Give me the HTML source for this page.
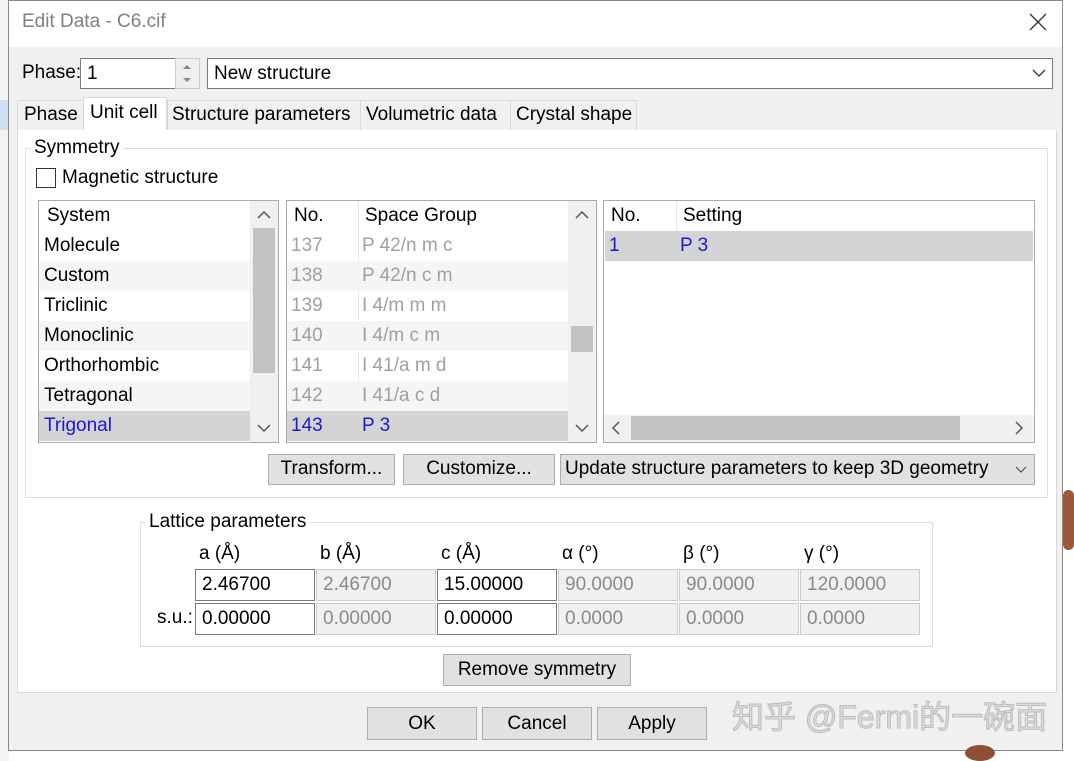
<!DOCTYPE html>
<html><head><meta charset="utf-8"><style>
*{box-sizing:border-box;margin:0;padding:0}
body{width:1074px;height:761px;position:relative;overflow:hidden;background:#fff;font-family:"Segoe UI","Liberation Sans","Noto Sans CJK SC",sans-serif;font-size:19px;color:#000}
.a{position:absolute}
.box{position:absolute;background:#fff;border:1px solid #7a7a7a}
.btn{position:absolute;background:#e1e1e1;border:1px solid #adadad;text-align:center;line-height:28px}
.t{position:absolute;white-space:nowrap;line-height:30px}
.g{color:#a0a0a0}.b{color:#1a1acc}
.row{position:absolute;height:30px}
.in{position:absolute;height:32px;border:1px solid #7a7a7a;background:#fff;padding-left:6px;line-height:30px}
.dis{border:1px solid #ccc;background:#f0f0f0;color:#8a8a8a}
</style></head><body>
<div class="a" style="left:0;top:0;width:9px;height:761px;background:#f3f3f3"></div>
<div class="a" style="left:0;top:100px;width:9px;height:30px;background:#cfe0f2"></div>
<div class="a" style="left:8px;top:0;width:1055px;height:751px;background:#f0f0f0;border:1px solid #888"></div>
<div class="a" style="left:9px;top:1px;width:1053px;height:46px;background:#fff"></div>
<div class="t" style="left:22px;top:7px;color:#808080;font-size:19px">Edit Data - C6.cif</div>
<svg class="a" style="left:1029px;top:13px" width="18" height="18"><path d="M1 1L17 17M17 1L1 17" stroke="#333" stroke-width="1.3"/></svg>
<div class="t" style="left:22px;top:58px">Phase:</div>
<div class="in" style="left:80px;top:58px;width:96px;height:31px;line-height:29px">1</div>
<div class="a" style="left:175px;top:58px;width:25px;height:31px;border:1px solid #ccc;background:#eee"></div>
<svg class="a" style="left:180px;top:62px" width="14" height="24"><path d="M3 7L7 3L11 7Z M3 16L7 20L11 16Z" fill="#888"/></svg>
<div class="in" style="left:207px;top:58px;width:846px;height:31px;line-height:29px">New structure</div>
<svg class="a" style="left:1032px;top:68px" width="14" height="10"><path d="M1 2L7 8L13 2" stroke="#333" fill="none" stroke-width="1.3"/></svg>
<div class="a" style="left:17px;top:100px;width:620px;height:31px;background:#f0f0f0;border:1px solid #d9d9d9"></div>
<div class="t" style="left:24px;top:100px">Phase</div>
<div class="a" style="left:83px;top:97px;width:84px;height:35px;background:#fff;border:1px solid #d9d9d9;border-bottom:none"></div>
<div class="t" style="left:90px;top:98px">Unit cell</div>
<div class="a" style="left:167px;top:100px;width:1px;height:30px;background:#d9d9d9"></div>
<div class="t" style="left:172px;top:100px">Structure parameters</div>
<div class="a" style="left:360px;top:100px;width:1px;height:30px;background:#d9d9d9"></div>
<div class="t" style="left:366px;top:100px">Volumetric data</div>
<div class="a" style="left:510px;top:100px;width:1px;height:30px;background:#d9d9d9"></div>
<div class="t" style="left:516px;top:100px">Crystal shape</div>
<div class="a" style="left:17px;top:130px;width:1040px;height:563px;background:#fff;border:1px solid #d9d9d9;border-top:none"></div>
<div class="a" style="left:25px;top:148px;width:1023px;height:350px;border:1px solid #dcdcdc"></div>
<div class="t" style="left:31px;top:133px;background:#fff;padding:0 3px">Symmetry</div>
<div class="a" style="left:36px;top:168px;width:20px;height:20px;border:1px solid #333;background:#fff"></div>
<div class="t" style="left:62px;top:163px">Magnetic structure</div>
<div class="box" style="left:38px;top:200px;width:241px;height:243px;border-color:#aaa"></div>
<div class="t" style="left:47px;top:201px">System</div>
<div class="row" style="left:39px;top:261px;width:211px;background:#f5f5f5"></div>
<div class="row" style="left:39px;top:321px;width:211px;background:#f5f5f5"></div>
<div class="row" style="left:39px;top:381px;width:211px;background:#f5f5f5"></div>
<div class="row" style="left:39px;top:411px;width:211px;background:#d4d4d4"></div>
<div class="t" style="left:44px;top:231px">Molecule</div>
<div class="t" style="left:44px;top:261px">Custom</div>
<div class="t" style="left:44px;top:291px">Triclinic</div>
<div class="t" style="left:44px;top:321px">Monoclinic</div>
<div class="t" style="left:44px;top:351px">Orthorhombic</div>
<div class="t" style="left:44px;top:381px">Tetragonal</div>
<div class="t b" style="left:44px;top:411px">Trigonal</div>
<div class="a" style="left:250px;top:201px;width:28px;height:241px;background:#f0f0f0"></div>
<div class="a" style="left:253px;top:228px;width:22px;height:145px;background:#c2c2c2"></div>
<svg class="a" style="left:257px;top:210px" width="14" height="10"><path d="M1 8L7 2L13 8" stroke="#555" fill="none" stroke-width="1.5"/></svg>
<svg class="a" style="left:257px;top:423px" width="14" height="10"><path d="M1 2L7 8L13 2" stroke="#555" fill="none" stroke-width="1.5"/></svg>
<div class="box" style="left:286px;top:200px;width:311px;height:243px;border-color:#aaa"></div>
<div class="a" style="left:358px;top:201px;width:1px;height:210px;background:#e8e8e8"></div>
<div class="t" style="left:294px;top:201px">No.</div>
<div class="t" style="left:365px;top:201px">Space Group</div>
<div class="row" style="left:287px;top:261px;width:281px;background:#f5f5f5"></div>
<div class="row" style="left:287px;top:321px;width:281px;background:#f5f5f5"></div>
<div class="row" style="left:287px;top:381px;width:281px;background:#f5f5f5"></div>
<div class="row" style="left:287px;top:411px;width:281px;background:#d4d4d4"></div>
<div class="t g" style="left:291px;top:231px">137</div><div class="t g" style="left:362px;top:231px">P 42/n m c</div>
<div class="t g" style="left:291px;top:261px">138</div><div class="t g" style="left:362px;top:261px">P 42/n c m</div>
<div class="t g" style="left:291px;top:291px">139</div><div class="t g" style="left:362px;top:291px">I 4/m m m</div>
<div class="t g" style="left:291px;top:321px">140</div><div class="t g" style="left:362px;top:321px">I 4/m c m</div>
<div class="t g" style="left:291px;top:351px">141</div><div class="t g" style="left:362px;top:351px">I 41/a m d</div>
<div class="t g" style="left:291px;top:381px">142</div><div class="t g" style="left:362px;top:381px">I 41/a c d</div>
<div class="t b" style="left:291px;top:411px">143</div><div class="t b" style="left:362px;top:411px">P 3</div>
<div class="a" style="left:568px;top:201px;width:28px;height:241px;background:#f0f0f0"></div>
<div class="a" style="left:571px;top:326px;width:22px;height:26px;background:#c2c2c2"></div>
<svg class="a" style="left:575px;top:210px" width="14" height="10"><path d="M1 8L7 2L13 8" stroke="#555" fill="none" stroke-width="1.5"/></svg>
<svg class="a" style="left:575px;top:423px" width="14" height="10"><path d="M1 2L7 8L13 2" stroke="#555" fill="none" stroke-width="1.5"/></svg>
<div class="box" style="left:603px;top:200px;width:432px;height:243px;border-color:#aaa"></div>
<div class="a" style="left:676px;top:201px;width:1px;height:30px;background:#e8e8e8"></div>
<div class="t" style="left:611px;top:201px">No.</div>
<div class="t" style="left:683px;top:201px">Setting</div>
<div class="row" style="left:605px;top:231px;width:428px;background:#d4d4d4"></div>
<div class="t b" style="left:609px;top:231px">1</div><div class="t b" style="left:680px;top:231px">P 3</div>
<div class="a" style="left:604px;top:415px;width:430px;height:27px;background:#f0f0f0"></div>
<div class="a" style="left:631px;top:416px;width:329px;height:24px;background:#c2c2c2"></div>
<svg class="a" style="left:611px;top:421px" width="10" height="14"><path d="M8 1L2 7L8 13" stroke="#555" fill="none" stroke-width="1.5"/></svg>
<svg class="a" style="left:1014px;top:421px" width="10" height="14"><path d="M2 1L8 7L2 13" stroke="#555" fill="none" stroke-width="1.5"/></svg>
<div class="btn" style="left:268px;top:454px;width:127px;height:31px">Transform...</div>
<div class="btn" style="left:403px;top:454px;width:152px;height:31px">Customize...</div>
<div class="btn" style="left:560px;top:454px;width:475px;height:31px;text-align:left;padding-left:4px">Update structure parameters to keep 3D geometry</div>
<svg class="a" style="left:1014px;top:465px" width="14" height="10"><path d="M2 2L7 7L12 2" stroke="#555" fill="none" stroke-width="1.2"/></svg>
<div class="a" style="left:140px;top:522px;width:793px;height:125px;border:1px solid #dcdcdc"></div>
<div class="t" style="left:146px;top:507px;background:#fff;padding:0 3px">Lattice parameters</div>
<div class="t" style="left:199px;top:539px">a (Å)</div>
<div class="t" style="left:320px;top:539px">b (Å)</div>
<div class="t" style="left:441px;top:539px">c (Å)</div>
<div class="t" style="left:562px;top:539px">α (°)</div>
<div class="t" style="left:683px;top:539px">β (°)</div>
<div class="t" style="left:804px;top:539px">γ (°)</div>
<div class="in" style="left:195px;top:569px;width:120px">2.46700</div>
<div class="in dis" style="left:316px;top:569px;width:120px">2.46700</div>
<div class="in" style="left:437px;top:569px;width:120px">15.00000</div>
<div class="in dis" style="left:558px;top:569px;width:120px">90.0000</div>
<div class="in dis" style="left:679px;top:569px;width:120px">90.0000</div>
<div class="in dis" style="left:800px;top:569px;width:120px">120.0000</div>
<div class="t" style="left:157px;top:603px">s.u.:</div>
<div class="in" style="left:195px;top:603px;width:120px">0.00000</div>
<div class="in dis" style="left:316px;top:603px;width:120px">0.00000</div>
<div class="in" style="left:437px;top:603px;width:120px">0.00000</div>
<div class="in dis" style="left:558px;top:603px;width:120px">0.0000</div>
<div class="in dis" style="left:679px;top:603px;width:120px">0.0000</div>
<div class="in dis" style="left:800px;top:603px;width:120px">0.0000</div>
<div class="btn" style="left:443px;top:654px;width:188px;height:32px;line-height:30px">Remove symmetry</div>
<div class="btn" style="left:367px;top:707px;width:110px;height:33px;line-height:31px">OK</div>
<div class="btn" style="left:482px;top:707px;width:110px;height:33px;line-height:31px">Cancel</div>
<div class="btn" style="left:597px;top:707px;width:110px;height:33px;line-height:31px">Apply</div>
<div class="t" style="left:732px;top:699px;font-size:32px;line-height:36px;color:#dcdcdc;font-family:'Liberation Sans','Noto Sans CJK SC',sans-serif;-webkit-text-stroke:1px #bdbdbd">知乎 @Fermi的一碗面</div>
<div class="a" style="left:1063px;top:490px;width:11px;height:60px;background:#9a5a3a;border-radius:6px"></div>
<div class="a" style="left:965px;top:745px;width:30px;height:16px;background:#8b5033;border-radius:50%"></div>
</body></html>
